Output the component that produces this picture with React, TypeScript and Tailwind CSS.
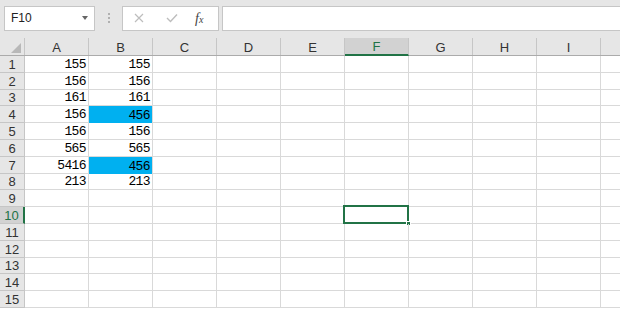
import React from 'react';

const cols = ['A', 'B', 'C', 'D', 'E', 'F', 'G', 'H', 'I', ''];
const colA = ['155', '156', '161', '156', '156', '565', '5416', '213'];
const colB = ['155', '156', '161', '456', '156', '565', '456', '213'];
const highlight = [3, 6];

function Toolbar() {
    return (
        <div className="flex items-center h-[38px] bg-[#e6e6e6] pl-[4px] pb-[2px]">
            <div className="flex items-center justify-between w-[91px] h-[25px] bg-white border border-[#c6c6c6] pl-[6px] pr-[6px]">
                <span className="text-[12px] text-[#222]">F10</span>
                <span className="w-0 h-0 border-l-[3.5px] border-r-[3.5px] border-t-[4px] border-l-transparent border-r-transparent border-t-[#666]"></span>
            </div>
            <div className="flex flex-col gap-[2px] ml-[13px] mr-[12px]">
                <span className="w-[2px] h-[2px] bg-[#b0b0b0]"></span>
                <span className="w-[2px] h-[2px] bg-[#b0b0b0]"></span>
                <span className="w-[2px] h-[2px] bg-[#b0b0b0]"></span>
            </div>
            <div className="flex items-center w-[97px] h-[25px] bg-white border border-[#c6c6c6]">
                <svg className="ml-[11px]" width="10" height="10" viewBox="0 0 10 10"><path d="M1 1L9 9M9 1L1 9" stroke="#bdbdbd" strokeWidth="1.2" /></svg>
                <svg className="ml-[22px]" width="12" height="10" viewBox="0 0 12 10"><path d="M1 5L4.5 8.5L11 1.5" stroke="#bdbdbd" strokeWidth="1.4" fill="none" /></svg>
                <span className="ml-[17px] text-[14px] italic text-[#444] font-['Liberation_Serif',serif]">f<span className="text-[10px]">x</span></span>
            </div>
            <div className="flex-1 h-[25px] ml-[3px] bg-white border border-[#c6c6c6] border-r-0"></div>
        </div>
    );
}

function HeaderRow() {
    return (
        <div className="flex h-[18px] bg-[#e6e6e6] border-b border-[#ababab]">
            <div className="relative w-[25px] shrink-0 border-r border-[#c6c6c6]">
                <span className="absolute right-[3px] bottom-[2px] w-0 h-0 border-l-[10px] border-l-transparent" style={{ borderBottom: '10px solid #b8b8b8' }}></span>
            </div>
            {cols.map((c, i) => (
                <div key={i}
                    className={`shrink-0 flex items-end justify-center pb-[1px] text-[13px] leading-none ${i === 9 ? 'w-[20px]' : 'w-[64px] border-r border-[#c6c6c6]'} ${c === 'F' ? 'bg-[#d2d2d2] text-[#217346] border-b-2 border-b-[#217346] -mb-px' : 'text-[#333]'}`}>
                    {c}
                </div>
            ))}
        </div>
    );
}

function Row({ n }: { n: number }) {
    const sel = n === 10;
    return (
        <div className="flex h-[16.8px] border-b border-[#d9d9d9] box-border">
            <div className={`w-[25px] shrink-0 flex items-end justify-center pb-[1px] text-[13px] leading-none -mb-px border-b border-b-[#c6c6c6] ${sel ? 'bg-[#d2d2d2] text-[#217346] border-r-2 border-r-[#217346]' : 'bg-[#e6e6e6] text-[#333] border-r border-r-[#c6c6c6]'}`}>
                {n}
            </div>
            {cols.map((c, i) => {
                let val = '';
                if (n <= 8 && i === 0) val = colA[n - 1];
                if (n <= 8 && i === 1) val = colB[n - 1];
                const hl = i === 1 && highlight.includes(n - 1);
                const active = sel && c === 'F';
                return (
                    <div key={i}
                        className={`relative shrink-0 flex items-end justify-end pr-[2px] pb-[1px] text-[13px] leading-none text-black font-['Liberation_Mono','Noto_Sans_CJK_SC',monospace] tracking-[-0.6px] ${i === 9 ? 'w-[20px]' : 'w-[64px] border-r border-[#d9d9d9]'} ${hl ? 'bg-[#00b0f0] -mb-px' : ''}`}>
                        {val}
                        {active && (
                            <>
                                <span className="absolute -left-[2px] -top-[2px] w-[66px] h-[19px] border-2 border-[#217346]"></span>
                                <span className="absolute -right-[3px] -bottom-[3px] w-[5px] h-[5px] bg-[#217346] border border-white"></span>
                            </>
                        )}
                    </div>
                );
            })}
        </div>
    );
}

export default function App() {
    return (
        <div className="w-[620px] h-[309px] overflow-hidden bg-white font-['Liberation_Sans','Noto_Sans_CJK_SC',sans-serif]">
            <Toolbar />
            <HeaderRow />
            {Array.from({ length: 15 }, (_, i) => (
                <Row key={i} n={i + 1} />
            ))}
        </div>
    );
}
